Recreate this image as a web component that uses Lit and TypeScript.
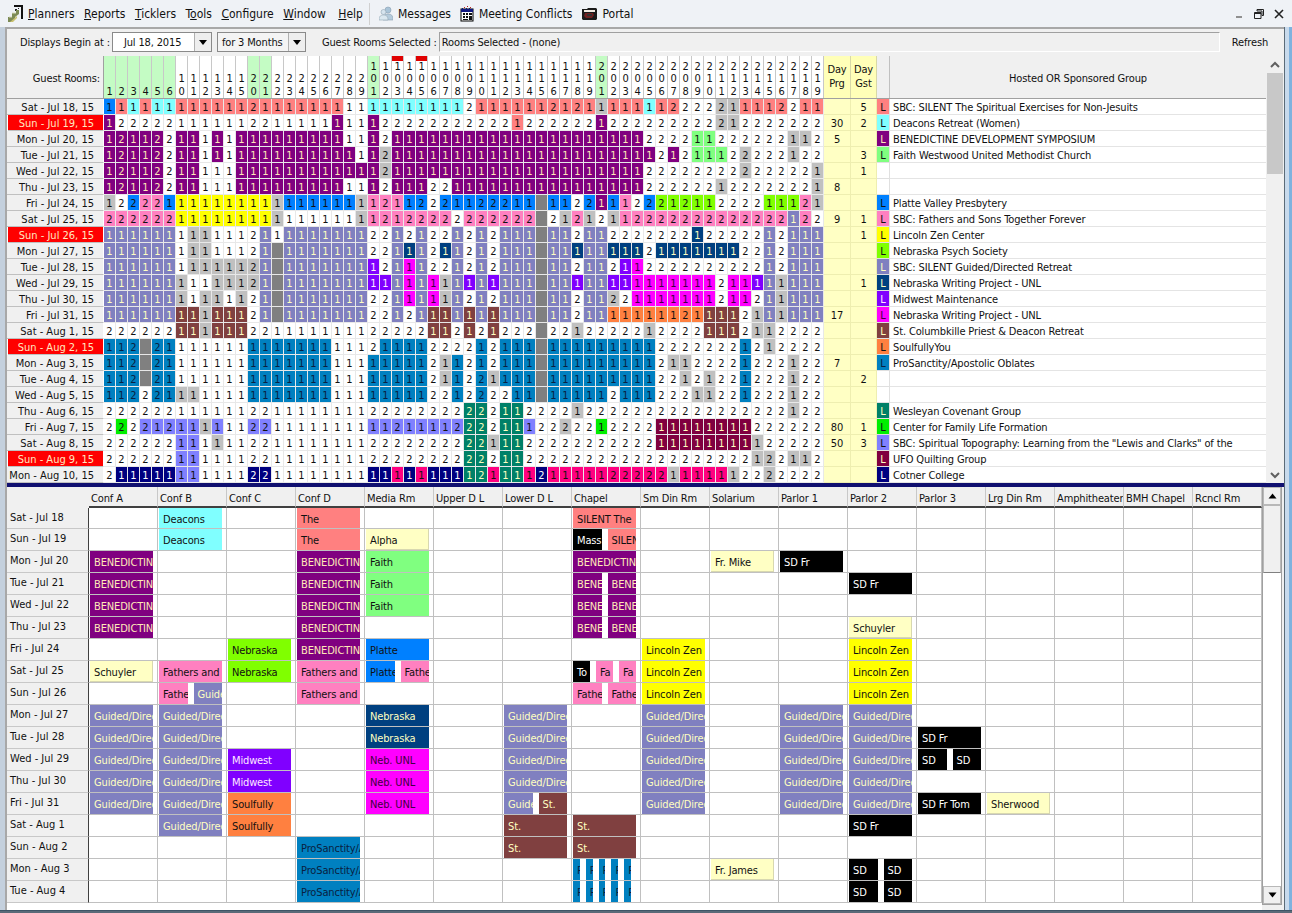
import { LitElement, html, css, nothing } from "lit";
import { customElement } from "lit/decorators.js";

type Row = { date: string; red?: boolean; d: string; c: string; prg?: string; gst?: string; lc?: string; name?: string };
const s = (x: string) => x.replace(/\s/g, "");

const ROWS: Row[] = [
  { date: "Sat - Jul 18, 15", d: "1111111111 1121111111 1111111111 2111111212 1111111222 2211112211", c: "bacaccaaaa aaaaaaaaaa wwcccccccc waaaaaaaaa axaaacaaww wxxaaaawaa", gst: "5", lc: "a", name: "SBC: SILENT The Spiritual Exercises for Non-Jesuits" },
  { date: "Sun - Jul 19, 15", red: true, d: "1222221111 1122111111 1112222222 2222122222 2122222222 2212222222", c: "pwwwwwwwww wwwwwwwwwp wwpwwwwwww wwwwawwwww wpwwwwwwww wxxwwwwwww", prg: "30", gst: "2", lc: "c", name: "Deacons Retreat (Women)" },
  { date: "Mon - Jul 20, 15", d: "1211221111 1111111111 1112111111 1111111111 1111122221 1222222112", c: "pppppwppwp wppppppppp wwpwpppppp pppppppppp pppppwwwwg gwwwwwwxxw", prg: "5", lc: "p", name: "BENEDICTINE DEVELOPMENT SYMPOSIUM" },
  { date: "Tue - Jul 21, 15", d: "1211221111 1111111111 1112111111 1111111111 1111112121 1122222122", c: "pppppwppwp wppppppppp pwpxpppppp pppppppppp ppppppwpwg ggwxwwwxww", gst: "3", lc: "g", name: "Faith Westwood United Methodist Church" },
  { date: "Wed - Jul 22, 15", d: "1211221111 1111111111 1112111111 1111111111 1111122222 2222222221", c: "pppppwppww wppppppppp pppxpppppp pppppppppp pppppwwwww wwwxwwwwwx", gst: "1" },
  { date: "Thu - Jul 23, 15", d: "1211221111 1111111111 1112111221 1111111111 1111122222 2122222221", c: "pppppwppww wppppppppp wwpwpppwwp pppppppppp pppppwwwww wxwwwwwwwx", prg: "8" },
  { date: "Fri - Jul 24, 15", d: "1222211111 1111111111 1112112221 122211-112 2111222121 1222211121", c: "xwbkkbyyyy yyyyxbbbbb bxkkkbbwbb bbbbbbdbbw bpbkwbllll lwwwwlllkx", lc: "b", name: "Platte Valley Presbytery" },
  { date: "Sat - Jul 25, 15", d: "2222221111 1111111111 1112122222 222222-212 1211222222 2222222122", c: "kkkkkkyyyy yyyyxwwwww wxkkkkkkkw kkkkkkdwxk xwxkkkkkkk kkkkkkkvkw", prg: "9", gst: "1", lc: "k", name: "SBC: Fathers and Sons Together Forever" },
  { date: "Sun - Jul 26, 15", red: true, d: "1111111111 1121111111 1122121221 212111-112 1122222221 2222212111", c: "vvvvvvwxxw wwwvwvvvvv vvwwvwvwwv wvwvvvdvvw vvwwwwwwwn wwwwwvwvvv", gst: "1", lc: "y", name: "Lincoln Zen Center" },
  { date: "Mon - Jul 27, 15", d: "1111111111 1121-11111 1122111211 212111-111 1111121111 1112212111", c: "vvvvvvwxxw wwwvdvvvvv vvwwvnvwnv wvwvvvdvvn vvnnnwnnnn nnnwwvwvvv", lc: "l", name: "Nebraska Psych Society" },
  { date: "Tue - Jul 28, 15", d: "1111111111 1121-11111 1112111221 212111-112 1121122222 2222212111", c: "vvvvvvwxxx xxxvdvvvvv vvuwvmvwwv wvwvvvdvvw vvwumwwwww wwwwwvwvvv", lc: "v", name: "SBC: SILENT Guided/Directed Retreat" },
  { date: "Wed - Jul 29, 15", d: "1111111111 1121-11111 1111111111 111111-111 1111111111 1211111111", c: "vvvvvvxwwx xxxvdvvvvv vvuuvmvmxv uvuvvvdvvu vvuummmmmm mwmmuvxvvv", gst: "1", lc: "n", name: "Nebraska Writing Project - UNL" },
  { date: "Thu - Jul 30, 15", d: "1111111111 1121-11111 1122111111 212111-112 1122111111 1211211111", c: "vvvvvvxwxx wxwvdvvvvv vvwwvmvmxv wvwvvvdvvw vvxwmmmmmm mwmmwvxvvv", lc: "u", name: "Midwest Maintenance" },
  { date: "Fri - Jul 31, 15", d: "1111111111 1121-11111 1122121111 111111-112 1111111121 1112111111", c: "vvvvvvrrxr rrwvdvvvvv vvwwvwvrrv rvrvvvdvvw vvoooooooo rrrwxvxvvv", prg: "17", lc: "m", name: "Nebraska Writing Project - UNL" },
  { date: "Sat - Aug 1, 15", d: "2222221111 1122111111 1122222112 121222-221 2222212222 1112112222", c: "wwwwwwrrxr rrwwwwwwww wwwwwwwrrw rwrwwwdwwx wwwwwxwwww rrrwxxwwww", lc: "r", name: "St. Columbkille Priest & Deacon Retreat" },
  { date: "Sun - Aug 2, 15", red: true, d: "112-211111 1111111111 1121111222 212111-111 1111112222 2221212222", c: "tttdttwwww wwtttttttw wwwttttwww wtwtttdttt ttttttwwww wwwtwxwwww", lc: "o", name: "SoulfullyYou" },
  { date: "Mon - Aug 3, 15", d: "112-211111 1111111111 1111111211 212111-111 1111112112 2221222122", c: "tttdttwwww wwtttttttw wwtttttwxt wtwtttdttt ttttttwxxw wwwtwwwxww", prg: "7", lc: "t", name: "ProSanctity/Apostolic Oblates" },
  { date: "Tue - Aug 4, 15", d: "112-211111 1111111111 1111111211 221111-111 1111112212 1221222122", c: "tttdttwwww wwtttttttw wwtttttwxt wtxtttdttt ttttttwwxw xwwtwwwxww", gst: "2" },
  { date: "Wed - Aug 5, 15", d: "1122211111 1111111111 1111111221 222211-111 1121112221 1221222122", c: "tttwttxxww wwtttttttw wwtttttwwt wtwwttdttt ttwtttwwwx xwwtwwwxww" },
  { date: "Thu - Aug 6, 15", d: "2222221111 1122111111 1122222222 2221122221 2222222222 2222222122", c: "wwwwwwwwww wwwwwwwwww wwwwwwwwww eeweewwwwx wwwwwwwwww wwwwwwwxww", lc: "e", name: "Wesleyan Covenant Group" },
  { date: "Fri - Aug 7, 15", d: "2222121111 1122111111 1111211112 2221112222 2122221111 1111222222", c: "wGwLLLLLxL wwLLwwwwww wwLLLLLLLL eeweeLwwxw wGwwwwMMMM MMMMwwwwww", prg: "80", gst: "1", lc: "G", name: "Center for Family Life Formation" },
  { date: "Sat - Aug 8, 15", d: "2222221111 1122111111 1122222222 2211122222 2222221111 1111122222", c: "wwwwwwLLwx wwwwwwwwww wwwwwwwwww eexeewwwww wwwwwwMMMM MMMMxwwwww", prg: "50", gst: "3", lc: "L", name: 'SBC: Spiritual Topography: Learning from the "Lewis and Clarks" of the' },
  { date: "Sun - Aug 9, 15", red: true, d: "2222221111 1122111111 1122222222 2221122222 2222222222 2222122112", c: "wwwwwwLLww wwwwwwwwww wwwwwwwwww eeweewwwww wwwwwwwwww wwwwxxwxxw", lc: "M", name: "UFO Quilting Group" },
  { date: "Mon - Aug 10, 15", d: "2111111111 1122111111 1111111111 1211112111 1122222111 1112222222", c: "wNNNNNLLww wwNNwwwwww wwNNHNHNNN eeHeeHNHHH HHHHHHHxHH HHxwwxwwww", lc: "N", name: "Cotner College" },
];

const ROOMS: string[] = [
  ..."1 2 3 4 5 6 10 11 12 13 14 15 20 21 22 23 24 25 26 27 28 29".split(" "),
  ...Array.from({ length: 19 }, (_, i) => String(101 + i)),
  ...Array.from({ length: 19 }, (_, i) => String(201 + i)),
];
const GREEN_ROOMS = new Set(["1", "2", "3", "4", "5", "6", "20", "21", "101", "201"]);
const FLAG_ROOMS = new Set(["103", "105"]);

const cls = (ch: string) => (ch >= "A" && ch <= "Z" ? `c-${ch.toLowerCase()}${ch.toLowerCase()}` : `c-${ch}`);

type Ev = [string, string];
const BEN: Ev = ["BENEDICTINE", "p"];
const GD: Ev = ["Guided/Directed", "v"];
const FA: Ev = ["Fathers and", "k"];
const LZ: Ev = ["Lincoln Zen", "y"];
const NE: Ev = ["Nebraska", "l"];
const NN: Ev = ["Nebraska", "n"];
const NU: Ev = ["Neb. UNL", "m"];
const MW: Ev = ["Midwest", "u"];
const SF: Ev = ["Soulfully", "o"];
const ST: Ev = ["St.", "r"];
const PS: Ev = ["ProSanctity/Apostolic", "t"];
const FAITH: Ev = ["Faith", "g"];
const DEA: Ev = ["Deacons", "c"];
const THE: Ev = ["The", "a"];
const SDF: Ev = ["SD Fr", "K"];
const SD: Ev = ["SD", "K"];

const SPACES = ["Conf A", "Conf B", "Conf C", "Conf D", "Media Rm", "Upper D L", "Lower D L", "Chapel", "Sm Din Rm", "Solarium", "Parlor 1", "Parlor 2", "Parlor 3", "Lrg Din Rm", "Amphitheater", "BMH Chapel", "Rcncl Rm"];
const SCHED: { label: string; e: Record<number, Ev[]> }[] = [
  { label: "Sat - Jul 18", e: { 1: [DEA], 3: [THE], 7: [["SILENT The", "a"]] } },
  { label: "Sun - Jul 19", e: { 1: [DEA], 3: [THE], 4: [["Alpha", "z"]], 7: [["Mass", "K"], ["SILENT", "a"]] } },
  { label: "Mon - Jul 20", e: { 0: [BEN], 3: [BEN], 4: [FAITH], 7: [BEN], 9: [["Fr. Mike", "z"]], 10: [SDF] } },
  { label: "Tue - Jul 21", e: { 0: [BEN], 3: [BEN], 4: [FAITH], 7: [BEN, BEN], 11: [SDF] } },
  { label: "Wed - Jul 22", e: { 0: [BEN], 3: [BEN], 4: [FAITH], 7: [BEN, BEN] } },
  { label: "Thu - Jul 23", e: { 0: [BEN], 3: [BEN], 7: [BEN, BEN], 11: [["Schuyler", "z"]] } },
  { label: "Fri - Jul 24", e: { 2: [NE], 3: [BEN], 4: [["Platte", "b"]], 8: [LZ], 11: [LZ] } },
  { label: "Sat - Jul 25", e: { 0: [["Schuyler", "z"]], 1: [FA], 2: [NE], 3: [FA], 4: [["Platte", "b"], ["Fathers", "k"]], 7: [["To", "K"], ["Fa", "k"], ["Fa", "k"]], 8: [LZ], 11: [LZ] } },
  { label: "Sun - Jul 26", e: { 1: [["Fathers", "k"], GD], 3: [FA], 7: [["Fathers", "k"], ["Fathers", "k"]], 8: [LZ], 11: [LZ] } },
  { label: "Mon - Jul 27", e: { 0: [GD], 1: [GD], 4: [NN], 6: [GD], 8: [GD], 10: [GD], 11: [GD] } },
  { label: "Tue - Jul 28", e: { 0: [GD], 1: [GD], 4: [NN], 6: [GD], 8: [GD], 10: [GD], 11: [GD], 12: [SDF] } },
  { label: "Wed - Jul 29", e: { 0: [GD], 1: [GD], 2: [MW], 4: [NU], 6: [GD], 8: [GD], 10: [GD], 11: [GD], 12: [SD, SD] } },
  { label: "Thu - Jul 30", e: { 0: [GD], 1: [GD], 2: [MW], 4: [NU], 6: [GD], 8: [GD], 10: [GD], 11: [GD] } },
  { label: "Fri - Jul 31", e: { 0: [GD], 1: [GD], 2: [SF], 4: [NU], 6: [GD, ST], 8: [GD], 10: [GD], 11: [GD], 12: [["SD Fr Tom", "K"]], 13: [["Sherwood", "z"]] } },
  { label: "Sat - Aug 1", e: { 1: [GD], 2: [SF], 6: [ST], 7: [ST], 11: [SDF] } },
  { label: "Sun - Aug 2", e: { 3: [PS], 6: [ST], 7: [ST] } },
  { label: "Mon - Aug 3", e: { 3: [PS], 7: [PS, PS, PS, PS, PS], 9: [["Fr. James", "z"]], 11: [SD, SD] } },
  { label: "Tue - Aug 4", e: { 3: [PS], 7: [PS, PS, PS, PS, PS], 11: [SD, SD] } },
];

const chevUp = html`<svg width="12" height="8" viewBox="0 0 12 8"><path d="M2 6 L6 2 L10 6" fill="none" stroke="#606060" stroke-width="2"/></svg>`;
const chevDown = html`<svg width="12" height="8" viewBox="0 0 12 8"><path d="M2 2 L6 6 L10 2" fill="none" stroke="#606060" stroke-width="2"/></svg>`;
const triUp = html`<svg width="9" height="6" viewBox="0 0 9 6"><path d="M4.5 0.5 L8.5 5.5 H0.5Z" fill="#000"/></svg>`;
const triDown = html`<svg width="9" height="6" viewBox="0 0 9 6"><path d="M4.5 5.5 L8.5 0.5 H0.5Z" fill="#000"/></svg>`;
const comboArrow = html`<svg width="8" height="5" viewBox="0 0 8 5"><path d="M0 0 H8 L4 5Z" fill="#000"/></svg>`;

@customElement("app-root")
export class AppRoot extends LitElement {
  static styles = css`
    :host { display: block; width: 1292px; height: 913px; overflow: hidden; background: #f0f0f0; color: #111;
      font-family: "DejaVu Sans Condensed", "DejaVu Sans", "Liberation Sans", sans-serif; font-stretch: condensed; font-size: 11px; letter-spacing: -0.14px; }
    * { box-sizing: border-box; }
    .app { display: flex; flex-direction: column; width: 1292px; height: 913px; background: #eef2f7; }
    .menubar { height: 27px; flex: none; display: flex; align-items: center; padding-left: 7px; font-size: 12px; background: #eff2f6; letter-spacing: 0; }
    .menubar u { text-decoration: underline; text-underline-offset: 1px; }
    .mi { margin-right: 9.5px; white-space: nowrap; }
    .gap4 { width: 4px; }
    .m-help { margin-left: 3px; margin-right: 6px; }
    .sep { width: 1px; height: 22px; background: #d0d0d0; margin: 0 9px 0 0; }
    .ti { display: flex; align-items: center; gap: 5px; margin-right: 10px; white-space: nowrap; }
    .ti-meet { margin-right: 10px; }
    .ti-msg { margin-right: 9px; }
    .spring { flex: 1; }
    .wctl { display: flex; align-items: center; gap: 10px; padding-right: 8px; }
    .body { flex: 1; display: flex; min-height: 0; }
    .edgeL { width: 5px; background: #c4d0dd; flex: none; }
    .edgeR { width: 8px; background: linear-gradient(90deg, #5b6b78 0 1px, #c8daec 1px 5px, #7fb2de 5px); flex: none; }
    .edgeB { height: 3px; flex: none; background: linear-gradient(180deg, #3e5566 0 1px, #5a6a78 1px); }
    .frame { flex: 1; min-width: 0; display: flex; flex-direction: column; background: #f0f0f0; border-top: 2px solid #a8a8a8; border-left: 2px solid #a8a8a8; }
    .toolbar { height: 27px; flex: none; display: flex; align-items: center; padding: 0 0 1px 13px; white-space: nowrap; }
    .combo { height: 20px; background: #fff; border: 1px solid #8a8a8a; display: flex; align-items: center; justify-content: space-between; padding-left: 3px; }
    .date { width: 100px; padding-left: 11px; margin-left: 2px; }
    .months { width: 89px; margin-left: 5px; padding-left: 4px; background: #f4f4f4; }
    .cbtn { width: 17px; height: 18px; display: flex; align-items: center; justify-content: center; background: #eee; border-left: 1px solid #b0b0b0; flex: none; }
    .sel { margin-left: 16px; }
    .selbox { width: 781px; height: 20px; margin-left: 2px; border: 1px solid #fff; border-left-color: #a0a0a0; border-top-color: #a0a0a0; display: flex; align-items: center; padding-left: 2px; }
    .refresh { margin-left: 12px; }
    .top { height: 427px; flex: none; display: flex; }
    .sheet { width: 1259px; flex: none; display: flex; flex-direction: column; background: #fff; }
    .hrow { height: 43px; display: flex; flex: none; background: #f0f0f0; border-bottom: 1px solid #a0a0a0; }
    .hguest { width: 97px; display: flex; align-items: center; justify-content: flex-end; padding: 2px 3px 0 0; border-right: 1px solid #a0a0a0; flex: none; }
    .hroom { width: 12px; flex: none; border-right: 1px solid #c8c8c8; display: flex; flex-direction: column; justify-content: flex-end; align-items: center; line-height: 12.5px; position: relative; background: #fff; padding-bottom: 0; }
    .hroom.green { background: #c4fcc4; }
    .flag { position: absolute; top: 0; left: 0; right: 0; height: 5px; background: #e00000; }
    .hday { background: #ffffb8; display: flex; align-items: center; justify-content: center; text-align: center; line-height: 14px; border-right: 1px solid #d8d8a8; flex: none; }
    .prg { width: 27px; }
    .gst { width: 26px; }
    .hl { width: 13px; flex: none; border-right: 1px solid #c0c0c0; }
    .hname { flex: 1; display: flex; align-items: center; justify-content: center; padding-top: 2px; }
    .row { height: 16px; flex: none; display: flex; line-height: 17px; }
    .rdate { width: 97px; flex: none; background: #f0f0f0; text-align: right; padding-right: 9px; border-right: 1px solid #fff; border-bottom: 1px solid #c0c0c0; white-space: nowrap; letter-spacing: 0; }
    .rdate.red { background: #ff0000; color: #ffe8c0; margin-left: 1px; width: 96px; }
    .cell { width: 12px; height: 16px; flex: none; text-align: center; border-right: 1px solid #e8e8e8; border-bottom: 1px solid #e8e8e8; letter-spacing: 0; }
    .rday { background: #ffffc4; text-align: center; border-right: 1px solid #eeeeb0; border-bottom: 1px solid #eeeeb0; flex: none; }
    .lc { width: 13px; flex: none; text-align: center; border-right: 1px solid #e0e0e0; border-bottom: 1px solid #e0e0e0; }
    .rname { flex: 1; padding-left: 3px; white-space: nowrap; overflow: hidden; border-bottom: 1px solid #e4e4e4; }
    .vs1 { width: 18px; flex: none; display: flex; flex-direction: column; background: #f0f0f0; }
    .vsb1 { height: 17px; display: flex; align-items: center; justify-content: center; flex: none; }
    .thumb1 { height: 101px; background: #c8c8c8; margin: 0 1px; flex: none; }
    .grow { flex: 1; }
    .split { height: 4px; flex: none; background: #101070; }
    .bottom { flex: 1; display: flex; min-height: 0; }
    .plan { width: 1255px; flex: none; display: grid; grid-template-columns: 82px repeat(17, 69px); grid-template-rows: 21px 21px repeat(17, 22px); overflow: hidden; align-content: start; background: #fff; }
    .ph { background: #f0f0f0; border-right: 1px solid #c8c8c8; border-bottom: 2px solid #404040; padding: 5px 0 0 2px; line-height: 14px; white-space: nowrap; overflow: hidden; }
    .pcorner { background: #f0f0f0; border-bottom: 1px solid #f0f0f0; }
    .plabel { background: #f0f0f0; padding: 1px 0 0 3px; line-height: 17px; border-bottom: 1px solid #c8c8c8; border-right: 1px solid #404040; white-space: nowrap; letter-spacing: 0; }
    .slotcell { border-right: 1px solid #c0c0c0; border-bottom: 1px solid #c0c0c0; padding-left: 1px; min-width: 0; overflow: hidden; }
    .slot { width: 63px; height: 100%; display: flex; gap: 6px; }
    .slot.n5 { width: 58px; }
    .ev { flex: 1 1 0; min-width: 0; overflow: hidden; white-space: nowrap; padding: 3px 0 0 4px; line-height: 18px; }
    .vs2 { width: 20px; flex: none; margin: 0 0 5px 0; display: flex; flex-direction: column; background: #fff; border-left: 1px solid #a0a0a0; border-right: 1px solid #a0a0a0; border-bottom: 1px solid #a0a0a0; }
    .vsb2 { height: 18px; flex: none; background: #f0f0f0; display: flex; align-items: center; justify-content: center; border: 1px solid #b8b8b8; }
    .thumb2 { height: 68px; flex: none; background: #f0f0f0; border: 1px solid #b8b8b8; border-bottom-color: #808080; }
    .c-w { background: #fff; }
    .c-a { background: #ff8080; }
    .c-c { background: #80ffff; }
    .c-p { background: #800080; color: #ffe8b8; }
    .c-g { background: #80ff80; }
    .c-x { background: #c0c0c0; }
    .c-y { background: #ffff00; }
    .c-b { background: #0080ff; }
    .c-k { background: #ff80c0; }
    .c-v { background: #8080c0; color: #ffffc0; }
    .c-d { background: #808080; }
    .c-n { background: #004080; color: #ffffc0; }
    .c-m { background: #ff00ff; color: #400040; }
    .c-u { background: #8000ff; color: #ffe8ff; }
    .c-r { background: #804040; color: #ffffc0; }
    .c-o { background: #ff8040; }
    .c-t { background: #0080c0; color: #0a2040; }
    .c-e { background: #008068; color: #ffffc0; }
    .c-l { background: #80ff00; }
    .c-gg { background: #00ee00; }
    .c-ll { background: #8080ff; }
    .c-mm { background: #800040; color: #ffffc0; }
    .c-nn { background: #000080; color: #ffffff; }
    .c-hh { background: #ff0080; }
    .c-kk { background: #000; color: #fff; }
    .c-z { background: #ffffc4; box-shadow: inset -1px -1px 0 #d8d8b0; }
  `;

  private menu() {
    return html`<div class="menubar">
      <svg width="17" height="19" viewBox="0 0 17 19">
        <path d="M7 1h9v14h-2V3H7z" fill="#111"/><path d="M8 5h2v2H8zM11 4h1v1h-1z" fill="#222"/>
        <path d="M1 18V13h4V9h4V6h3v4l-4 3v2l-4 3z" fill="#7d8b55"/><path d="M2 13h3M5 9h4" stroke="#d8dcc0" fill="none"/>
        <path d="M3 18l7-6v2l-4 4z" fill="#c8c070"/>
      </svg>
      <span class="gap4"></span>
      <span class="mi"><u>P</u>lanners</span>
      <span class="mi"><u>R</u>eports</span>
      <span class="mi"><u>T</u>icklers</span>
      <span class="mi">T<u>o</u>ols</span>
      <span class="mi"><u>C</u>onfigure</span>
      <span class="mi"><u>W</u>indow</span>
      <span class="mi m-help"><u>H</u>elp</span>
      <span class="sep"></span>
      <span class="ti ti-msg"><svg width="14" height="15" viewBox="0 0 14 15"><circle cx="9" cy="4" r="3" fill="#a9c4d8" stroke="#8aa0b2" stroke-width=".6"/><path d="M4 14c0-5 2-6 5-6s5 1 5 6z" fill="#b4cbdc" stroke="#8aa0b2" stroke-width=".6"/><circle cx="4.5" cy="6" r="2.5" fill="#d6e4ee" stroke="#92a6b4" stroke-width=".6"/><path d="M0 14c0-4 2-5 4.500-5S9 10 9 14z" fill="#dbe8f0" stroke="#92a6b4" stroke-width=".6"/></svg>Messages</span>
      <span class="ti ti-meet"><svg width="14" height="16" viewBox="0 0 14 16"><path d="M4 1h1v1H4zM7 0h1v1H7zM10 1h1v1h-1z" fill="#c02020"/><path d="M2 2h1v1H2zM6 2h1v1H6zM9 2h1v1H9z" fill="#2040c0"/><rect x="1" y="3" width="12" height="12" fill="#fff" stroke="#000"/><rect x="1" y="3" width="12" height="3" fill="#101880"/><path d="M3 7h2v2H3zM6 7h2v2H6zM9 7h3v2H9zM3 10h2v2H3zM6 10h2v2H6zM9 10h3v4H9zM3 13h5v1H3z" fill="#111"/></svg>Meeting Conflicts</span>
      <span class="ti"><svg width="15" height="13" viewBox="0 0 15 13"><path d="M0 2h5l1-1h8l1 1v10l-1 1H1l-1-1z" fill="#1a1a1a"/><path d="M2 3h11v2H2z" fill="#f0e8e0"/><path d="M3 6h8l1 2-2 3H4l-2-2z" fill="#702020"/><path d="M5 7h5v2H5z" fill="#333"/></svg>Portal</span>
      <span class="spring"></span>
      <span class="wctl">
        <svg width="9" height="9" viewBox="0 0 9 9"><path d="M1 7h6v2H1z" fill="#909090"/></svg>
        <svg width="10" height="10" viewBox="0 0 10 10"><path d="M3 .5h6.500v6H8v-4.500H3zM.5 3.500H7v6H.5zM.5 4.500H7" fill="none" stroke="#222"/></svg>
        <svg width="10" height="10" viewBox="0 0 10 10"><path d="M1 1l8 8M9 1l-8 8" stroke="#222" stroke-width="1.6"/></svg>
      </span>
    </div>`;
  }

  private toolbar() {
    return html`<div class="toolbar">
      <span>Displays Begin at :</span>
      <div class="combo date"><span>Jul 18, 2015</span><span class="cbtn">${comboArrow}</span></div>
      <div class="combo months"><span>for 3 Months</span><span class="cbtn">${comboArrow}</span></div>
      <span class="sel">Guest Rooms Selected :</span>
      <div class="selbox">Rooms Selected - (none)</div>
      <span class="refresh">Refresh</span>
    </div>`;
  }

  private sheet() {
    return html`<div class="sheet">
      <div class="hrow">
        <div class="hguest">Guest Rooms:</div>
        ${ROOMS.map((r) => html`<div class="hroom ${GREEN_ROOMS.has(r) ? "green" : ""}">
          ${FLAG_ROOMS.has(r) ? html`<span class="flag"></span>` : nothing}
          ${r.split("").map((ch) => html`<span>${ch}</span>`)}
        </div>`)}
        <div class="hday prg">Day<br />Prg</div>
        <div class="hday gst">Day<br />Gst</div>
        <div class="hl"></div>
        <div class="hname">Hosted OR Sponsored Group</div>
      </div>
      ${ROWS.map((row) => {
        const d = s(row.d);
        const c = s(row.c);
        return html`<div class="row">
          <div class="rdate ${row.red ? "red" : ""}">${row.date}</div>
          ${Array.from({ length: 60 }, (_, i) => html`<div class="cell ${cls(c[i] ?? "w")}">${d[i] === "-" ? "" : d[i]}</div>`)}
          <div class="rday prg">${row.prg ?? ""}</div>
          <div class="rday gst">${row.gst ?? ""}</div>
          <div class="lc ${row.lc ? cls(row.lc) : ""}">${row.lc ? "L" : ""}</div>
          <div class="rname">${row.name ?? ""}</div>
        </div>`;
      })}
    </div>`;
  }

  private plan() {
    return html`<div class="plan">
      <div class="pcorner"></div>
      ${SPACES.map((n) => html`<div class="ph">${n}</div>`)}
      ${SCHED.map(
        (r) => html`<div class="plabel">${r.label}</div>
          ${SPACES.map((_, i) => {
            const evs = r.e[i] ?? [];
            return html`<div class="slotcell">
              <div class="slot ${evs.length === 5 ? "n5" : ""}">
                ${evs.map((e) => html`<div class="ev ${cls(e[1])}">${e[0]}</div>`)}
              </div>
            </div>`;
          })}`
      )}
    </div>`;
  }

  render() {
    return html`<div class="app">
      ${this.menu()}
      <div class="body">
        <div class="edgeL"></div>
        <div class="frame">
          ${this.toolbar()}
          <div class="top">
            ${this.sheet()}
            <div class="vs1">
              <div class="vsb1">${chevUp}</div>
              <div class="thumb1"></div>
              <div class="grow"></div>
              <div class="vsb1">${chevDown}</div>
            </div>
          </div>
          <div class="split"></div>
          <div class="bottom">
            ${this.plan()}
            <div class="vs2">
              <div class="vsb2">${triUp}</div>
              <div class="thumb2"></div>
              <div class="grow"></div>
              <div class="vsb2">${triDown}</div>
            </div>
          </div>
        </div>
        <div class="edgeR"></div>
      </div>
      <div class="edgeB"></div>
    </div>`;
  }
}
